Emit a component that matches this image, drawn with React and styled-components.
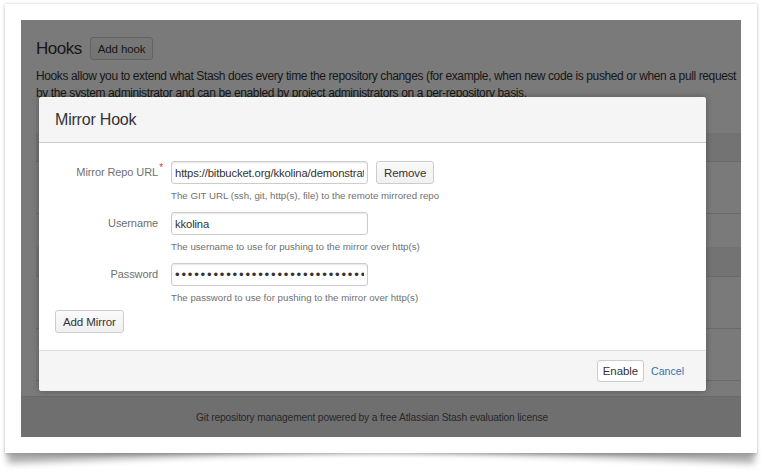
import React from "react";
import styled, { createGlobalStyle } from "styled-components";

const GlobalStyle = createGlobalStyle`
  html {
    background: #ffffff;
  }
  body {
    margin: 0;
    padding: 0;
    font-family: "Liberation Sans", Arial, sans-serif;
  }
`;

/*************************************************************************/

const Shell = styled.div`
  position: relative;
  isolation: isolate;
  padding: 4px 0 0 5px;
  height: 472px;
  box-sizing: border-box;
`;

const Frame = styled.div`
  position: relative;
  width: 752px;
  height: 449px;
  box-sizing: border-box;
  padding: 16px;
  background: #fff;
  box-shadow: 0 0 3px rgba(0, 0, 0, 0.2), 0 3px 3px rgba(0, 0, 0, 0.12);

  &::before,
  &::after {
    content: "";
    position: absolute;
    z-index: -1;
    bottom: 8px;
    width: 50%;
    height: 12px;
    background: #999;
    box-shadow: 0 11px 7px rgba(0, 0, 0, 0.33);
  }
  &::before {
    left: 2px;
    transform: rotate(-2.2deg);
  }
  &::after {
    right: 2px;
    transform: rotate(2.2deg);
  }
`;

const Page = styled.div`
  position: relative;
  height: 417px;
  overflow: hidden;
  background: #fff;
  display: flex;
  flex-direction: column;
  color: #333;
`;

const Content = styled.div`
  flex: 1;
  padding: 17px 0 0 15px;
  overflow: hidden;
`;

const HeadingRow = styled.div`
  display: flex;
  align-items: center;
  gap: 8px;
`;

const Heading = styled.h2`
  margin: 0;
  font-size: 17px;
  font-weight: normal;
  letter-spacing: -0.5px;
  color: #333;
`;

const Button = styled.button`
  font-family: inherit;
  font-size: ${p => p.$size || 11.5}px;
  color: #333;
  height: ${p => p.$h || 23}px;
  padding: 0 ${p => p.$pad || 7}px;
  background: ${p => (p.$plain ? "#fff" : "linear-gradient(#fafafa, #f0f0f0)")};
  border: 1px solid #ccc;
  border-radius: 3px;
  white-space: nowrap;
  letter-spacing: -0.1px;
  cursor: pointer;
`;

const Intro = styled.p`
  margin: 8px 0 0 0;
  font-size: 12px;
  line-height: 17px;
  white-space: nowrap;
  letter-spacing: -0.38px;
`;

const Table = styled.div`
  margin-top: 31px;
  display: flex;
  flex-direction: column;
`;

const TableHead = styled.div`
  height: ${p => p.$h || 28}px;
  background: #f0f0f0;
  border-bottom: 1px solid #ddd;
`;

const TableRow = styled.div`
  height: ${p => p.$h || 51}px;
  border-bottom: ${p => (p.$last ? "none" : "1px solid #ddd")};
`;

const Gap = styled.div`
  height: 33px;
`;

const Footer = styled.div`
  height: 40px;
  background: #e8e8e8;
  border-top: 1px solid #ddd;
  display: flex;
  align-items: center;
  justify-content: center;
  padding-right: 18px;
  font-size: 10.2px;
  color: #555;
  letter-spacing: -0.15px;
`;

const Blanket = styled.div`
  position: absolute;
  inset: 0;
  background: rgba(0, 0, 0, 0.52);
`;

/*************************************************************************/

const Dialog = styled.div`
  position: absolute;
  left: 18px;
  top: 77px;
  width: 667px;
  height: 294px;
  background: #fff;
  border-radius: 3px;
  box-shadow: 0 0 6px rgba(0, 0, 0, 0.3);
  display: flex;
  flex-direction: column;
  overflow: hidden;
`;

const DialogHeader = styled.div`
  height: 45px;
  background: #f5f5f5;
  border-bottom: 1px solid #cccccc;
  display: flex;
  align-items: center;
  padding-left: 16px;
  font-size: 16px;
  color: #333;
  letter-spacing: -0.2px;
`;

const DialogBody = styled.div`
  flex: 1;
  padding: 18px 16px 0 16px;
`;

const Field = styled.div`
  display: grid;
  grid-template-columns: 103px auto;
  column-gap: 13px;
  row-gap: 5px;
  margin-bottom: 10px;

  &:last-of-type {
    margin-bottom: 6px;
  }
`;

const Label = styled.label`
  position: relative;
  text-align: right;
  font-size: 11px;
  color: #707070;
  line-height: 23px;
  white-space: nowrap;
  letter-spacing: -0.1px;
`;

const Required = styled.span`
  position: absolute;
  right: -5px;
  top: -5px;
  color: #d04437;
  font-size: 10px;
`;

const Controls = styled.div`
  display: flex;
  align-items: center;
  gap: 8px;
`;

const TextInput = styled.input`
  box-sizing: border-box;
  width: 197px;
  height: 23px;
  padding: 0 3px;
  font-family: inherit;
  font-size: ${p => (p.type === "password" ? 13 : 11.3)}px;
  letter-spacing: ${p => (p.type === "password" ? "1.85px" : "-0.15px")};
  color: #333;
  border: 1px solid #ccc;
  border-radius: 3px;
  box-shadow: inset 0 1px 2px rgba(0, 0, 0, 0.1);
  outline: none;
`;

const Help = styled.div`
  grid-column: 2;
  font-size: 9.7px;
  color: #707070;
  line-height: 13px;
  white-space: nowrap;
`;

const DialogFooter = styled.div`
  height: 40px;
  background: #f5f5f5;
  border-top: 1px solid #e0e0e0;
  display: flex;
  align-items: center;
  justify-content: flex-end;
  gap: 7px;
  padding-right: 22px;
`;

const LinkButton = styled.a`
  font-size: 10.6px;
  color: #3572b0;
  text-decoration: none;
  cursor: pointer;
`;

/*************************************************************************/

const fields = [
  {
    label: "Mirror Repo URL",
    required: true,
    type: "text",
    value: "https://bitbucket.org/kkolina/demonstration",
    help: "The GIT URL (ssh, git, http(s), file) to the remote mirrored repo",
    remove: true
  },
  {
    label: "Username",
    type: "text",
    value: "kkolina",
    help: "The username to use for pushing to the mirror over http(s)"
  },
  {
    label: "Password",
    type: "password",
    value: "supersecretpassword12345678901",
    help: "The password to use for pushing to the mirror over http(s)"
  }
];

const FormField = ({ label, required, type, value, help, remove }) => (
  <Field>
    <Label>
      {label}
      {required && <Required>*</Required>}
    </Label>
    <Controls>
      <TextInput type={type} defaultValue={value} readOnly />
      {remove && <Button>Remove</Button>}
    </Controls>
    <Help>{help}</Help>
  </Field>
);

const MirrorHookDialog = () => (
  <Dialog>
    <DialogHeader>Mirror Hook</DialogHeader>
    <DialogBody>
      {fields.map((f, i) => (
        <FormField key={i} {...f} />
      ))}
      <Button>Add Mirror</Button>
    </DialogBody>
    <DialogFooter>
      <Button $plain $pad={5} $h={22}>Enable</Button>
      <LinkButton>Cancel</LinkButton>
    </DialogFooter>
  </Dialog>
);

export default function App() {
  return (
    <>
      <GlobalStyle />
      <Shell>
        <Frame>
          <Page>
            <Content>
              <HeadingRow>
                <Heading>Hooks</Heading>
                <Button>Add hook</Button>
              </HeadingRow>
              <Intro>
                Hooks allow you to extend what Stash does every time the repository changes (for example, when new code is pushed or when a pull request
                <br />
                by the system administrator and can be enabled by project administrators on a per-repository basis.
              </Intro>
              <Table>
                <TableHead />
                <TableRow />
                <Gap />
                <TableHead $h={29} />
                <TableRow />
                <TableRow />
                <TableRow $h={16} $last />
              </Table>
            </Content>
            <Footer>Git repository management powered by a free Atlassian Stash evaluation license</Footer>
            <Blanket />
            <MirrorHookDialog />
          </Page>
        </Frame>
      </Shell>
    </>
  );
}
